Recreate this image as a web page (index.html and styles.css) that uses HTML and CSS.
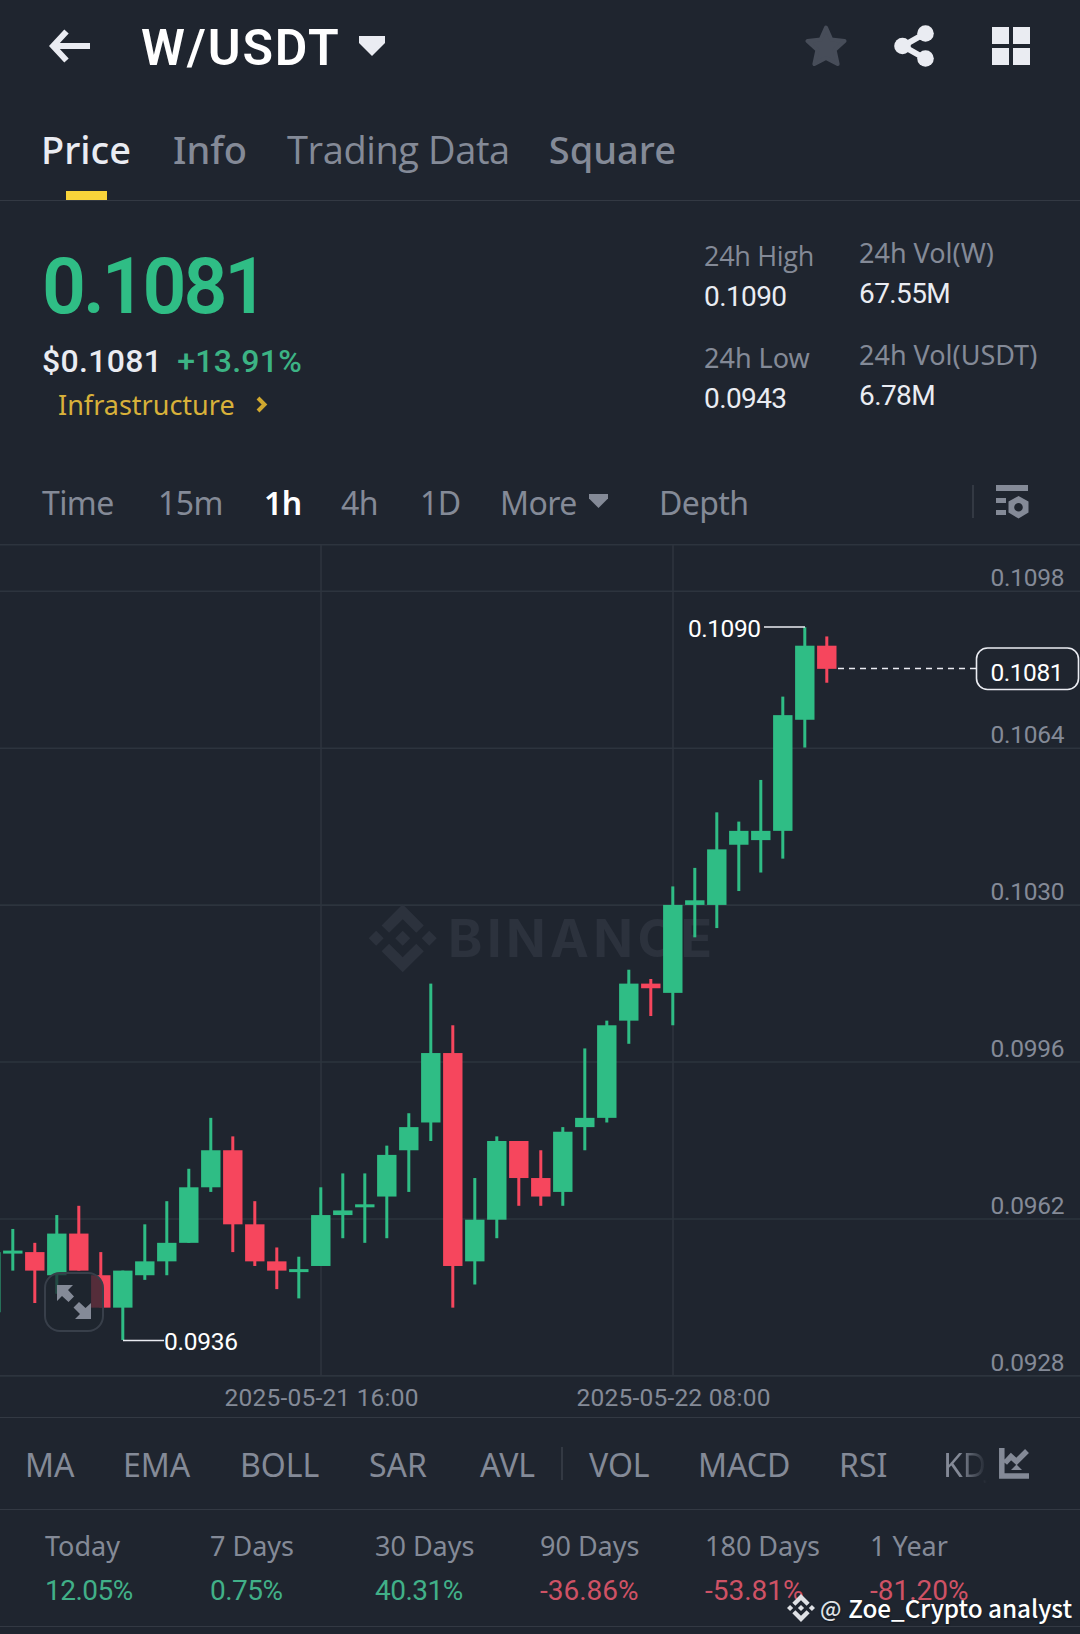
FILE: index.html
```
<!DOCTYPE html>
<html lang="en">
<head>
  <meta charset="UTF-8">
  <title>W/USDT</title>
  <link rel="stylesheet" href="styles.css">
</head>
<body>
  <header class="header">
    <svg class="back" width="42" height="34" viewBox="0 0 42 34"><path d="M17.500 2.500L4 17L17.500 31.500M4 17H41" fill="none" stroke="#eaecf2" stroke-width="6"/></svg>
    <h1 class="pair">W/USDT</h1>
    <svg class="pair-caret" width="26" height="20" viewBox="0 0 26 20"><path d="M0 0H26V7L13 20L0 7Z" fill="#eaecf2"/></svg>
    <div class="actions">
      <svg width="42" height="42" viewBox="0 0 42 42"><path d="M21 2.500L26.300 14.500L39.500 16L29.600 25L32.600 39L21 33L9.400 39L12.400 25L2.500 16L15.700 14.500Z" fill="#474d59" stroke="#474d59" stroke-width="4" stroke-linejoin="round"/></svg>
      <svg width="40" height="42" viewBox="0 0 40 42"><path d="M31 8.500L9 21L31 33.500" fill="none" stroke="#eaecf2" stroke-width="6"/><circle cx="31.500" cy="8.500" r="8.300" fill="#eaecf2"/><circle cx="8.500" cy="21" r="8.300" fill="#eaecf2"/><circle cx="31.500" cy="33.500" r="8.300" fill="#eaecf2"/></svg>
      <svg width="38" height="38" viewBox="0 0 38 38"><path d="M0 0H17V17H0ZM21 0H38V17H21ZM0 21H17V38H0ZM21 21H38V38H21Z" fill="#eaecf2"/></svg>
    </div>
  </header>

  <nav class="tabs">
    <span class="tab active">Price</span>
    <span class="tab">Info</span>
    <span class="tab trading">Trading Data</span>
    <span class="tab">Square</span>
  </nav>

  <section class="quote">
    <div class="price-box">
      <div class="price">0.1081</div>
      <div class="price-sub"><span class="fiat">$0.1081</span><span class="change">+13.91%</span></div>
      <div class="tag">Infrastructure
        <svg width="12" height="17" viewBox="0 0 12 17"><path d="M2 2L8.500 8.500L2 15" fill="none" stroke="#d0a82f" stroke-width="4"/></svg>
      </div>
    </div>
    <div class="stats">
      <div class="stat"><span class="label high">24h High</span><span class="value">0.1090</span></div>
      <div class="stat"><span class="label">24h Low</span><span class="value">0.0943</span></div>
    </div>
    <div class="stats volume">
      <div class="stat"><span class="label">24h Vol(W)</span><span class="value">67.55M</span></div>
      <div class="stat"><span class="label">24h Vol(USDT)</span><span class="value">6.78M</span></div>
    </div>
  </section>

  <nav class="intervals">
    <span>Time</span>
    <span>15m</span>
    <span class="active">1h</span>
    <span>4h</span>
    <span>1D</span>
    <span class="more">More <svg width="19" height="14" viewBox="0 0 19 14"><path d="M0 0H19V4.500L9.500 14L0 4.500Z" fill="#848a97"/></svg></span>
    <span>Depth</span>
    <i class="sep"></i>
    <svg class="settings" width="33" height="34" viewBox="0 0 33 34"><path d="M0 0H32V6H0ZM0 13H10V18H0ZM0 25H10V30H0Z" fill="#848a97"/><path fill-rule="evenodd" d="M22.500 11L32.500 16.500V27.500L22.500 33.500L12.500 27.500V16.500ZM22.500 18A4.300 4.300 0 1 0 22.500 26.600A4.300 4.300 0 1 0 22.500 18Z" fill="#848a97"/></svg>
  </nav>

  <section class="chart">
    <svg id="chart" width="1080" height="874" viewBox="0 544 1080 874">
      <g id="grid" class="grid"></g>
      <g class="brand">
        <g transform="translate(402.700 938.300) scale(.68)">
          <path d="M0 -50L31 -19L20 -8L0 -28L-20 -8L-31 -19ZM0 50L31 19L20 8L0 28L-20 8L-31 19ZM0 -11L11 0L0 11L-11 0ZM-39 -11L-28 0L-39 11L-50 0ZM39 -11L50 0L39 11L28 0Z"/>
        </g>
        <text x="448" y="957" textLength="264">BINANCE</text>
      </g>
      <g id="candles"></g>
      <g id="axis" class="axis"></g>
      <g class="marks">
        <path d="M764 627H805M123 1340.500H164"/>
        <path d="M838 668.500H976" stroke-dasharray="6 5"/>
        <rect x="976.500" y="648" width="102" height="41.500" rx="11"/>
        <text x="688" y="637" textLength="73">0.1090</text>
        <text x="164" y="1349.500" textLength="74">0.0936</text>
        <text x="990.500" y="680.500" textLength="73">0.1081</text>
      </g>
    </svg>
    <div class="expand">
      <svg width="34" height="34" viewBox="0 0 34 34"><path d="M0 0H16L11 5L17 11.500L11.500 17L5 11L0 16ZM34 34H18L23 29L16.500 22.500L22 17L28.500 23L34 18Z" fill="#848a97"/></svg>
    </div>
  </section>

  <nav class="indicators">
    <span>MA</span>
    <span>EMA</span>
    <span>BOLL</span>
    <span>SAR</span>
    <span>AVL</span>
    <i class="sep"></i>
    <span>VOL</span>
    <span>MACD</span>
    <span>RSI</span>
    <span class="fade">KDJ</span>
    <svg width="30" height="31" viewBox="0 0 30 31"><path d="M2.800 0V28H30M6 15L12 8.500L17.500 13.500L28 3" fill="none" stroke="#848a97" stroke-width="5.500"/><path d="M17.500 16.500L23 22H12Z" fill="#848a97"/></svg>
  </nav>

  <section class="returns">
    <div><span class="label">Today</span><span class="pct up">12.05%</span></div>
    <div><span class="label">7 Days</span><span class="pct up">0.75%</span></div>
    <div><span class="label">30 Days</span><span class="pct up">40.31%</span></div>
    <div><span class="label">90 Days</span><span class="pct down">-36.86%</span></div>
    <div><span class="label">180 Days</span><span class="pct down">-53.81%</span></div>
    <div><span class="label">1 Year</span><span class="pct down">-81.20%</span></div>
  </section>

  <div class="author">
    <svg width="28" height="28" viewBox="-50 -50 100 100"><path d="M0 -50L31 -19L20 -8L0 -28L-20 -8L-31 -19ZM0 50L31 19L20 8L0 28L-20 8L-31 19ZM0 -11L11 0L0 11L-11 0ZM-39 -11L-28 0L-39 11L-50 0ZM39 -11L50 0L39 11L28 0Z" fill="#dfe1e5"/></svg>
    <span class="at">@</span><span>Zoe_Crypto analyst</span>
  </div>

  <script src="chart.js"></script>
</body>
</html>
```
FILE: styles.css
```
html, body {
  margin: 0;
  padding: 0;
  width: 1080px;
  height: 1634px;
  overflow: hidden;
  background-color: #1f252f;
  color: #848a97;
  font-family: 'Noto Sans', sans-serif;
}

svg {
  display: block;
  flex: none;
}

span {
  white-space: nowrap;
}

.header {
  display: flex;
  align-items: center;
  height: 92px;
  padding: 0 50px 0 49px;
}

.pair {
  margin: 4px 0 0 50px;
  width: 218px;
  font-family: Roboto, sans-serif;
  font-size: 50px;
  font-weight: 600;
  line-height: 60px;
  letter-spacing: 1.9px;
  color: #ffffff;
}

.actions {
  display: flex;
  align-items: center;
  margin-left: auto;
}

.actions svg:nth-child(2) {
  margin: 0 58px 0 47px;
}

.tabs {
  display: flex;
  box-sizing: border-box;
  height: 109px;
  padding-left: 41px;
  gap: 42px;
  border-bottom: 1px solid #333943;
  font-size: 38px;
  font-weight: 500;
  line-height: 115px;
}

.tab {
  position: relative;
}

.tab.active {
  color: #eaecf2;
}

.tab.active::after {
  content: "";
  position: absolute;
  left: 25px;
  bottom: 0;
  width: 41px;
  height: 9px;
  background-color: #f8d33a;
}

.trading, .label.high {
  font-family: 'Open Sans', sans-serif;
}

.trading {
  margin: 0 -3px 0 -2px;
  letter-spacing: -0.4px;
}

.label.high {
  letter-spacing: -0.3px;
}

.quote {
  display: flex;
  height: 250px;
}

.price-box {
  width: 662px;
  padding: 41px 0 0 42px;
}

.price {
  font-family: Roboto, sans-serif;
  font-size: 77px;
  font-weight: 600;
  line-height: 90px;
  letter-spacing: -3.1px;
  color: #2fbd85;
}

.price-sub {
  display: flex;
  gap: 15px;
  margin-top: 9px;
  font-family: Roboto, sans-serif;
  font-size: 32px;
  font-weight: 500;
  line-height: 40px;
  letter-spacing: 0.3px;
}

.fiat {
  color: #eaecf2;
}

.change {
  color: #3cb384;
}

.tag {
  display: flex;
  align-items: center;
  gap: 21px;
  padding-left: 16px;
  font-size: 27px;
  line-height: 47px;
  color: #d8b13a;
}

.stats {
  width: 155px;
  padding-top: 35px;
}

.stats.volume {
  padding-top: 32px;
}

.stat {
  display: flex;
  flex-direction: column;
  height: 102px;
}

.stat .label, .returns .label {
  font-size: 27px;
  line-height: 40px;
}

.stat .value {
  font-family: Roboto, sans-serif;
  font-size: 28px;
  line-height: 42px;
  letter-spacing: -0.6px;
  color: #eaecf2;
}

.intervals {
  display: grid;
  grid-template-columns: 116px 106px 77px 79px 80px 159px 313px 24px 40px;
  align-items: center;
  box-sizing: border-box;
  height: 93px;
  padding: 10px 0 0 42px;
  font-size: 32px;
  line-height: 44px;
  letter-spacing: -0.6px;
}

.intervals .active {
  color: #ffffff;
  font-weight: 600;
}

.intervals .sep, .settings {
  margin-top: -2px;
}

.more {
  display: flex;
  align-items: center;
  gap: 12px;
}

.more svg {
  margin-top: -4px;
}

.sep {
  width: 2px;
  height: 33px;
  background-color: #333943;
}

.chart {
  position: relative;
  height: 873px;
  border-bottom: 1px solid #333943;
}

.grid path {
  stroke: #2d343e;
  stroke-width: 1.6;
}

.brand {
  fill: #2c323d;
}

.brand text {
  font-family: Inter, sans-serif;
  font-size: 52px;
  font-weight: 700;
}

.axis text, .marks text {
  font-family: Roboto, sans-serif;
  font-size: 24.5px;
}

.axis text {
  fill: #848a97;
}

.marks path, .marks rect {
  fill: none;
  stroke: #eaecf2;
  stroke-width: 1.6;
}

.marks text {
  fill: #ffffff;
}

.up {
  color: #41b088;
  fill: #2fbd85;
}

.down {
  color: #cf5265;
  fill: #f6465d;
}

.expand {
  position: absolute;
  left: 44px;
  top: 728px;
  display: flex;
  align-items: center;
  justify-content: center;
  box-sizing: border-box;
  width: 60px;
  height: 60px;
  border: 2px solid #383f4a;
  border-radius: 16px;
  background-color: rgba(31, 37, 47, 0.75);
}

.indicators {
  display: grid;
  grid-template-columns: 98px 117px 129px 111px 81px 28px 109px 141px 104px 56px 30px;
  align-items: center;
  box-sizing: border-box;
  height: 92px;
  padding: 2px 0 0 25px;
  border-bottom: 1px solid #333943;
  font-size: 32px;
}

.indicators .sep, .indicators svg {
  margin-top: -2px;
}

.fade {
  width: 46px;
  background: linear-gradient(90deg, #848a97 35%, #1f252f 95%);
  -webkit-background-clip: text;
  color: transparent;
}

.returns {
  display: grid;
  grid-template-columns: repeat(6, 165px);
  box-sizing: border-box;
  height: 117px;
  padding: 16px 0 0 45px;
  border-bottom: 1px solid #333943;
}

.returns div {
  display: flex;
  flex-direction: column;
}

.pct {
  font-family: Roboto, sans-serif;
  font-size: 28px;
  line-height: 50px;
}

.pct.up {
  letter-spacing: -0.5px;
}

/* author signature sits over the last row */
.author {
  position: absolute;
  right: 8px;
  top: 1588px;
  display: flex;
  align-items: center;
  gap: 7px;
  height: 38px;
  font-family: 'Noto Sans CJK SC', sans-serif;
  font-size: 24.3px;
  font-weight: 500;
  letter-spacing: -0.05px;
  color: #ffffff;
  text-shadow: 0 1px 2px #11161d;
}

.author svg {
  margin: 2px -2px 0 0;
}

.at {
  font-size: 22px;
  color: #dfe1e5;
}
```
FILE: chart.js
```
// prices are in 0.0001 USDT
// [high, body top, body bottom, low, up]
const candles = [
  [955, 955, 942, 942, 1], [960, 955, 955, 951, 1], [957, 955, 951, 944, 0],
  [963, 959, 950, 946, 1], [965, 959, 951, 951, 0], [955, 950, 943, 943, 0],
  [951, 951, 943, 936, 1], [961, 953, 950, 949, 1], [966, 957, 953, 950, 1],
  [973, 969, 957, 957, 1], [984, 977, 969, 968, 1], [980, 977, 961, 955, 0],
  [966, 961, 953, 952, 0], [956, 953, 951, 947, 0], [954, 951, 951, 945, 1],
  [969, 963, 952, 952, 1], [972, 964, 963, 958, 1], [972, 965, 965, 957, 1],
  [978, 976, 967, 958, 1], [985, 982, 977, 968, 1], [1013, 998, 983, 979, 1],
  [1004, 998, 952, 943, 0], [971, 962, 953, 948, 1], [980, 979, 962, 958, 1],
  [979, 979, 971, 965, 0], [977, 971, 967, 965, 0], [982, 981, 968, 965, 1],
  [999, 984, 982, 977, 1], [1005, 1004, 984, 983, 1], [1016, 1013, 1005, 1000, 1],
  [1014, 1013, 1012, 1006, 0], [1034, 1030, 1011, 1004, 1], [1038, 1031, 1030, 1023, 1],
  [1050, 1042, 1030, 1025, 1], [1048, 1046, 1043, 1033, 1], [1057, 1046, 1044, 1037, 1],
  [1075, 1071, 1046, 1040, 1], [1090, 1086, 1070, 1064, 1], [1088, 1086, 1081, 1078, 0]
];

const gridY = p => 591.3 + (1098 - p) * 4.615;
const y = p => 645.7 + (1086 - p) * 4.629;

let bars = "";
candles.forEach(([high, top, bottom, low, up], i) => {
  const x = -9.2 + i * 22;
  const h = Math.max(y(bottom) - y(top), 3);
  const bodyY = top === bottom ? y(top) - 1.5 : y(top);
  bars += `<g class="${up ? "up" : "down"}">
    <rect x="${x - 1.5}" y="${y(high)}" width="3" height="${y(low) - y(high)}"/>
    <rect x="${x - 9.7}" y="${bodyY}" width="19.4" height="${h}"/></g>`;
});
document.getElementById("candles").innerHTML = bars;

let grid = '<path d="M0 544.700H1080M321 544V1375.700M673 544V1375.700"/>';
let axis = "";
for (let p = 1098; p >= 928; p -= 34) {
  grid += `<path d="M0 ${gridY(p)}H1080"/>`;
  axis += `<text x="990.500" y="${gridY(p) - 5.3}" textLength="74">0.${String(p).padStart(4, "0")}</text>`;
}
axis += '<text x="224.500" y="1405.500" textLength="194">2025-05-21 16:00</text>';
axis += '<text x="576.500" y="1405.500" textLength="194">2025-05-22 08:00</text>';
document.getElementById("grid").innerHTML = grid;
document.getElementById("axis").innerHTML = axis;
```
